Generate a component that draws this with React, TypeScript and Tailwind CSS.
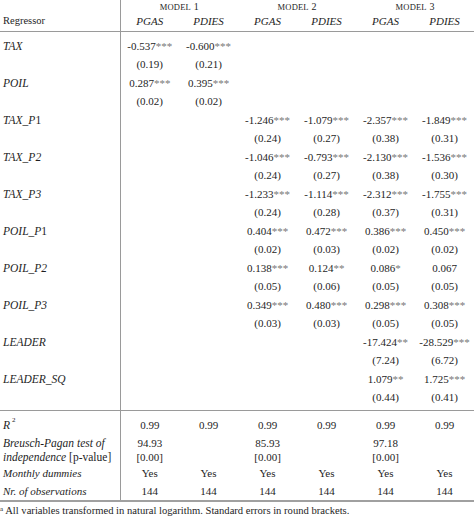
import type { ReactNode } from 'react'

type Row = {
  label?: ReactNode
  vals: string[]
}

const Coef = ({ v }: { v: string }) => {
  const m = v.match(/^([^*]*)(\**)$/)
  const num = m ? m[1] : v
  const stars = m ? m[2] : ''
  return (
    <span>
      {num}
      {stars && <span className="text-[#777]">{stars}</span>}
    </span>
  )
}

const P = ({ name, n }: { name: string; n: string }) => (
  <>
    <i>{name}</i>
    {n === '1' ? n : <i>{n}</i>}
  </>
)

const rows: Row[] = [
  { label: <i>TAX</i>, vals: ['-0.537***', '-0.600***', '', '', '', ''] },
  { vals: ['(0.19)', '(0.21)', '', '', '', ''] },
  { label: <i>POIL</i>, vals: ['0.287***', '0.395***', '', '', '', ''] },
  { vals: ['(0.02)', '(0.02)', '', '', '', ''] },
  { label: <P name="TAX_P" n="1" />, vals: ['', '', '-1.246***', '-1.079***', '-2.357***', '-1.849***'] },
  { vals: ['', '', '(0.24)', '(0.27)', '(0.38)', '(0.31)'] },
  { label: <P name="TAX_P" n="2" />, vals: ['', '', '-1.046***', '-0.793***', '-2.130***', '-1.536***'] },
  { vals: ['', '', '(0.24)', '(0.27)', '(0.38)', '(0.30)'] },
  { label: <P name="TAX_P" n="3" />, vals: ['', '', '-1.233***', '-1.114***', '-2.312***', '-1.755***'] },
  { vals: ['', '', '(0.24)', '(0.28)', '(0.37)', '(0.31)'] },
  { label: <P name="POIL_P" n="1" />, vals: ['', '', '0.404***', '0.472***', '0.386***', '0.450***'] },
  { vals: ['', '', '(0.02)', '(0.03)', '(0.02)', '(0.02)'] },
  { label: <P name="POIL_P" n="2" />, vals: ['', '', '0.138***', '0.124**', '0.086*', '0.067'] },
  { vals: ['', '', '(0.05)', '(0.06)', '(0.05)', '(0.05)'] },
  { label: <P name="POIL_P" n="3" />, vals: ['', '', '0.349***', '0.480***', '0.298***', '0.308***'] },
  { vals: ['', '', '(0.03)', '(0.03)', '(0.05)', '(0.05)'] },
  { label: <i>LEADER</i>, vals: ['', '', '', '', '-17.424**', '-28.529***'] },
  { vals: ['', '', '', '', '(7.24)', '(6.72)'] },
  { label: <i>LEADER_SQ</i>, vals: ['', '', '', '', '1.079**', '1.725***'] },
  { vals: ['', '', '', '', '(0.44)', '(0.41)'] },
]

const cols = ['PGAS', 'PDIES', 'PGAS', 'PDIES', 'PGAS', 'PDIES']

const App = () => {
  const labelCell = 'pl-[3px] text-left border-r border-[#9a9a9a] whitespace-nowrap'
  const valCell = 'text-center whitespace-nowrap p-0'

  return (
    <div className="w-[474px] h-[520px] bg-white text-[#1e1e1e] text-[11px] leading-none font-['Liberation_Serif',serif]">
      <table className="table-fixed border-collapse w-[474px]">
        <colgroup>
          <col className="w-[120px]" />
          {cols.map((_, i) => (
            <col key={i} className="w-[59px]" />
          ))}
        </colgroup>
        <thead>
          <tr className="h-[12px]">
            <th className={labelCell} />
            {['1', '2', '3'].map((n) => (
              <th key={n} colSpan={2} className="text-center font-normal p-0 align-bottom">
                <span className="text-[8.5px] uppercase tracking-[0.2px]">Model</span>{' '}
                <span className="text-[10px]">{n}</span>
              </th>
            ))}
          </tr>
          <tr className="h-[19px] border-b border-[#9a9a9a]">
            <th className={`${labelCell} font-normal text-[10.5px]`}>Regressor</th>
            {cols.map((c, i) => (
              <th key={i} className={`${valCell} font-normal italic text-[11px]`}>
                {c}
              </th>
            ))}
          </tr>
        </thead>
        <tbody>
          <tr className="h-[6px]">
            <td className={labelCell} />
            <td colSpan={6} />
          </tr>
          {rows.map((r, i) => (
            <tr key={i} className="h-[18.5px]">
              <td className={`${labelCell} text-[11.5px]`}>{r.label}</td>
              {r.vals.map((v, j) => (
                <td key={j} className={valCell}>
                  {v && <Coef v={v} />}
                </td>
              ))}
            </tr>
          ))}
          <tr className="h-[3px] border-b border-[#9a9a9a]">
            <td className={labelCell} />
            <td colSpan={6} />
          </tr>
          <tr className="h-[6px]">
            <td className={labelCell} />
            <td colSpan={6} />
          </tr>
          <tr className="h-[19px]">
            <td className={`${labelCell} text-[11.5px]`}>
              <i>R</i>
              <span className="text-[7px] ml-[2px] align-top relative -top-[3px]">2</span>
            </td>
            {cols.map((_, j) => (
              <td key={j} className={valCell}>0.99</td>
            ))}
          </tr>
          <tr className="h-[29px]">
            <td className={`${labelCell} leading-[14px] text-[11.5px]`}>
              <i>Breusch-Pagan test of</i>
              <br />
              <i>independence</i> [p-value]
            </td>
            {['94.93', '', '85.93', '', '97.18', ''].map((v, j) => (
              <td key={j} className={`${valCell} leading-[14px]`}>
                {v && (
                  <>
                    {v}
                    <br />
                    [0.00]
                  </>
                )}
              </td>
            ))}
          </tr>
          <tr className="h-[19px]">
            <td className={labelCell}>
              <i>Monthly dummies</i>
            </td>
            {cols.map((_, j) => (
              <td key={j} className={valCell}>Yes</td>
            ))}
          </tr>
          <tr className="h-[18px] border-b-2 border-[#a0a0a0]">
            <td className={labelCell}>
              <i>Nr. of observations</i>
            </td>
            {cols.map((_, j) => (
              <td key={j} className={valCell}>144</td>
            ))}
          </tr>
        </tbody>
      </table>
      <p className="mt-[4px] text-[10.6px] whitespace-nowrap">
        <sup className="text-[7px]">a</sup> All variables transformed in natural logarithm. Standard errors in round brackets.
      </p>
    </div>
  )
}

export default App
